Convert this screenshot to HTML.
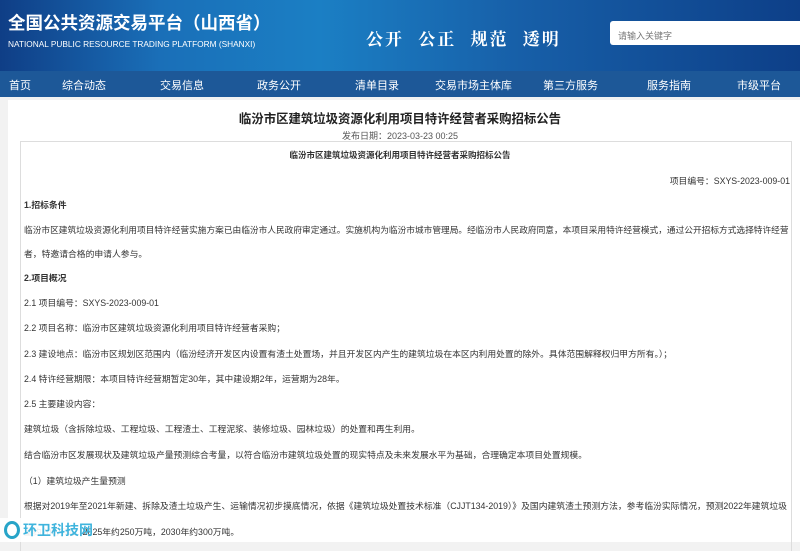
<!DOCTYPE html>
<html><head><meta charset="utf-8"><style>
*{margin:0;padding:0;box-sizing:border-box}
body{width:800px;height:542px;overflow:hidden;background:#f2f2f2;font-family:"Liberation Sans","Noto Sans CJK SC",sans-serif;position:relative}
.hd{position:absolute;left:0;top:0;width:800px;height:71px;background:linear-gradient(90deg,#0f3e86 0%,#1a6fb8 20%,#1b7fc4 40%,#175fa8 65%,#0d3f88 100%)}
.t1{position:absolute;left:8px;top:10px;color:#fff;font-size:17.5px;font-weight:bold}
.t2{position:absolute;left:8px;top:39px;color:#fff;font-size:8.3px}
.slog{position:absolute;left:366px;top:25px;color:#fff;font-size:17px;font-weight:bold;word-spacing:8px;letter-spacing:2px;font-family:"Liberation Serif","Noto Serif CJK SC",serif}
.srch{position:absolute;left:610px;top:21px;width:190px;height:24px;background:#fff;border-radius:3px 0 0 3px;font-size:9px;color:#777;padding:8px 0 0 8px}
.nav{position:absolute;left:0;top:71px;width:800px;height:26px;background:#1d5898}
.nav span{position:absolute;top:6px;color:#fff;font-size:11px}
.pan{position:absolute;left:8px;top:100px;width:792px;height:442px;background:#fff}
.tt{position:absolute;left:0;width:800px;text-align:center;top:109px;font-size:12.4px;font-weight:bold;color:#222}
.dt{position:absolute;left:0;width:800px;text-align:center;top:129px;font-size:9px;color:#555}
.box{position:absolute;left:20px;top:141px;width:772px;height:410px;border:1px solid #ddd;border-bottom:none}
.l{position:absolute;left:24px;font-size:8.8px;color:#333;white-space:nowrap}
</style></head><body>
<div class="hd">
<div class="t1">全国公共资源交易平台（山西省）</div>
<div class="t2">NATIONAL PUBLIC RESOURCE TRADING PLATFORM (SHANXI)</div>
<div class="slog">公开 公正 规范 透明</div>
<div class="srch">请输入关键字</div>
</div>
<div class="nav">
<span style="left:9px">首页</span><span style="left:62px">综合动态</span><span style="left:160px">交易信息</span><span style="left:257px">政务公开</span><span style="left:355px">清单目录</span><span style="left:435px">交易市场主体库</span><span style="left:543px">第三方服务</span><span style="left:647px">服务指南</span><span style="left:737px">市级平台</span>
</div>
<div class="pan"></div>
<div class="tt">临汾市区建筑垃圾资源化利用项目特许经营者采购招标公告</div>
<div class="dt">发布日期：2023-03-23 00:25</div>
<div class="box"></div>
<div class="l" style="left:0;width:800px;text-align:center;top:149px;font-weight:bold;font-size:8.5px">临汾市区建筑垃圾资源化利用项目特许经营者采购招标公告</div>
<div class="l" style="left:auto;right:10px;top:174px">项目编号：SXYS-2023-009-01</div>
<div class="l" style="top:198px;font-weight:bold">1.招标条件</div>
<div class="l" style="top:223px;font-size:8.7px">临汾市区建筑垃圾资源化利用项目特许经营实施方案已由临汾市人民政府审定通过。实施机构为临汾市城市管理局。经临汾市人民政府同意，本项目采用特许经营模式，通过公开招标方式选择特许经营</div>
<div class="l" style="top:247px">者，特邀请合格的申请人参与。</div>
<div class="l" style="top:271px;font-weight:bold">2.项目概况</div>
<div class="l" style="top:296px">2.1 项目编号：SXYS-2023-009-01</div>
<div class="l" style="top:321px">2.2 项目名称：临汾市区建筑垃圾资源化利用项目特许经营者采购；</div>
<div class="l" style="top:347px">2.3 建设地点：临汾市区规划区范围内（临汾经济开发区内设置有渣土处置场，并且开发区内产生的建筑垃圾在本区内利用处置的除外。具体范围解释权归甲方所有。）；</div>
<div class="l" style="top:372px">2.4 特许经营期限：本项目特许经营期暂定30年，其中建设期2年，运营期为28年。</div>
<div class="l" style="top:397px">2.5 主要建设内容：</div>
<div class="l" style="top:422px">建筑垃圾（含拆除垃圾、工程垃圾、工程渣土、工程泥浆、装修垃圾、园林垃圾）的处置和再生利用。</div>
<div class="l" style="top:448px">结合临汾市区发展现状及建筑垃圾产量预测综合考量，以符合临汾市建筑垃圾处置的现实特点及未来发展水平为基础，合理确定本项目处置规模。</div>
<div class="l" style="top:474px">（1）建筑垃圾产生量预测</div>
<div class="l" style="top:499px">根据对2019年至2021年新建、拆除及渣土垃圾产生、运输情况初步摸底情况，依据《建筑垃圾处置技术标准（CJJT134-2019）》及国内建筑渣土预测方法，参考临汾实际情况，预测2022年建筑垃圾</div>
<div class="l" style="top:525px">量约200万吨，2025年约250万吨，2030年约300万吨。</div>
<div style="position:absolute;left:0;top:518px;width:78px;height:24px;background:rgba(255,255,255,.9)"></div>
<div style="position:absolute;left:4px;top:521px;width:16px;height:18px;border:3px solid #27a4c8;border-radius:50%"></div>
<div style="position:absolute;left:23px;top:520px;font-size:14px;font-weight:bold;color:#3fb4dd;font-family:'Noto Sans CJK SC',sans-serif">环卫科技网</div>
</body></html>
